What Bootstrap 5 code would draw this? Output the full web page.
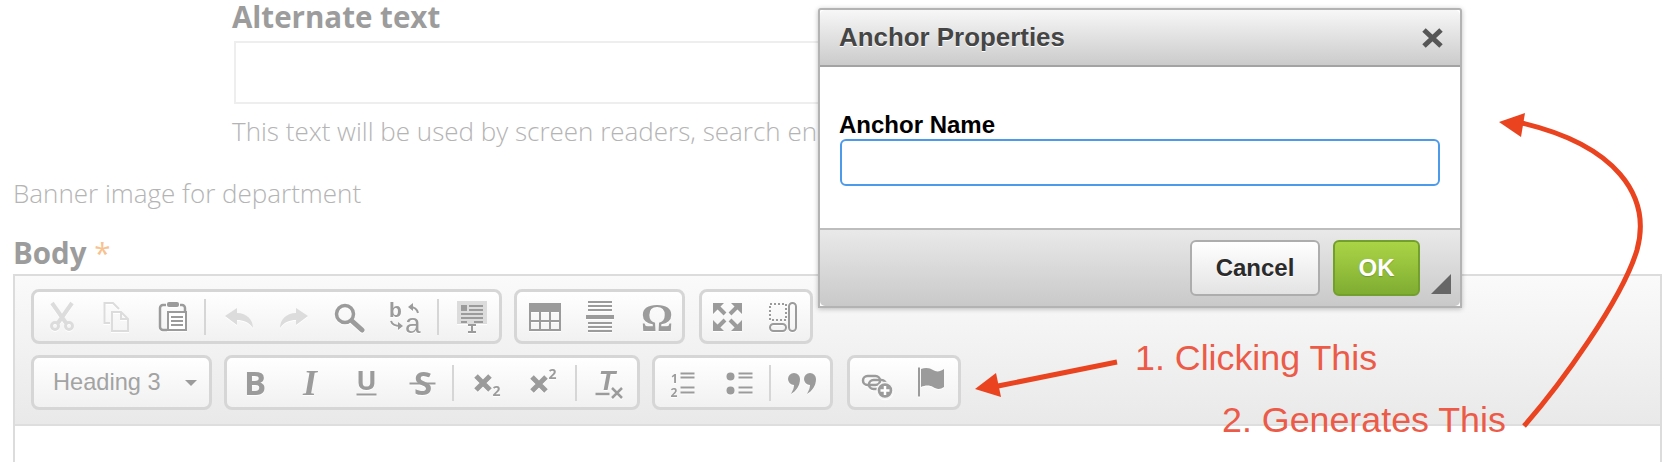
<!DOCTYPE html>
<html lang="en">
<head>
  <meta charset="UTF-8" />
  <meta name="viewport" content="width=device-width, initial-scale=1.0"/>
  <title>Anchor Properties</title>
  <link href="https://cdn.jsdelivr.net/npm/bootstrap@5.3.0/dist/css/bootstrap.min.css" rel="stylesheet">
  <style>
    html, body { height: 462px; overflow: hidden; }
    body { background: #fff; font-family: "Open Sans", sans-serif; position: relative; }

    .page-wrap { padding-left: 13px; padding-right: 18px; height: 462px; overflow: hidden; }
    .field-title { font-size: 29.5px; line-height: 34px; font-weight: 700; color: #9c9c9c; margin: 0; }
    .req-star { color: #f8c18e; font-weight: 400; }
    .alt-block { margin-left: 219px; }
    .alt-input { margin: 7px 0 0 2px; width: 1000px; height: 63px; border: 2px solid #eee; border-radius: 0; }
    .help-line { font-size: 26px; line-height: 36px; font-weight: 300; color: #b4b4b4; margin: 0; white-space: nowrap; }
    .help-alt { margin-top: 9px; }
    .help-banner { margin-top: 26px; }
    .title-body { margin-top: 25px; }

    /* editor */
    .editor-box { margin-top: 4px; height: 220px; border: 2px solid #dcdcdc; border-bottom: 0; background: #fff; }
    .editor-bar { height: 150px; padding: 13px 16px 0; background: linear-gradient(#fafafa, #e9e9e9); border-bottom: 2px solid #dedede; }
    .bar-row { height: 55px; gap: 12px; }
    .bar-row + .bar-row { margin-top: 11px; }
    .tool-group { height: 100%; border: 3px solid #d6d6d6; border-radius: 8px; background: linear-gradient(#fff, #f1f1f1); }
    .tool-group-far { margin-left: 2px; }
    .tool-btn { width: 55px; color: #9b9b9b; }
    .tool-btn-tight { width: 54px; }
    .tool-btn svg { width: 32px; height: 32px; overflow: visible; filter: drop-shadow(0 1px 0 rgba(255,255,255,.9)); }
    .tool-btn.is-off { color: #dcdcdc; }
    .tool-sep { width: 12.5px; }
    .tool-sep-slim { width: 10px; }
    .tool-sep::after, .tool-sep-slim::after { content: ""; display: block; width: 2px; height: 36px; margin: 0 auto; background: #d6d6d6; }
    .format-combo { width: 181px; padding: 0 12px 0 19px; font-family: "Liberation Sans", sans-serif; font-size: 23.6px; color: #a3a3a3; }
    .combo-caret { width: 0; height: 0; border: 6px solid transparent; border-top: 6px solid #9b9b9b; border-bottom: 0; }
    .ico-txt { font-family: "Open Sans", sans-serif; font-weight: 700; fill: currentColor; }
    .ico-serif { font-family: "Liberation Serif", serif; font-weight: 700; fill: currentColor; }
    .ico-sans { font-family: "Liberation Sans", sans-serif; fill: currentColor; }

    /* dialog */
    .anchor-dialog { position: absolute; left: 818px; top: 8px; width: 644px; height: 300px; border: 2px solid #b3b3b3; border-radius: 3px 3px 0 0; box-shadow: 0 1px 5px rgba(0,0,0,.25); font-family: "Liberation Sans", sans-serif; }
    .dlg-head { height: 57px; padding: 0 17px 0 19px; border-bottom: 2px solid #a3a3a3; border-radius: 0; background: linear-gradient(#f7f7f7, #cbcbcb); }
    .dlg-title { font-size: 25.9px; font-weight: 700; color: #454545; text-shadow: 0 1px 0 #fff; }
    .dlg-body { padding: 0 19px; flex: 1; background: #fff; }
    .dlg-label { display: block; margin: 44px 0 1px; font-size: 24px; line-height: 27px; font-weight: 700; color: #000; }
    .dlg-input { margin: 0 0 0 1px; width: 600px; height: 47px; border: 2px solid #4c9aea; border-radius: 6px; }
    .dlg-foot { position: relative; height: 78px; padding: 10px 40px 0 0; border-top: 2px solid #bdbdbd; border-radius: 0; background: linear-gradient(#e9e9e9, #c9c9c9); gap: 13px; }
    .dlg-btn { height: 56px; font-size: 24px; line-height: 1; font-weight: 700; border-radius: 6px; padding: 0; }
    .btn-cancel { width: 130px; color: #2b2b2b; border: 2px solid #adadad; background: linear-gradient(#fff, #e3e3e3); text-shadow: 0 1px 0 #fff; }
    .btn-ok { width: 87px; color: #fff; border: 2px solid #739f2d; background: linear-gradient(#aad446, #7fad32); text-shadow: 0 1px 1px rgba(0,0,0,.2); }
    .resize-grip { position: absolute; right: 9px; bottom: 12px; width: 20px; height: 20px; background: #666; clip-path: polygon(100% 0, 100% 100%, 0 100%); }

    /* annotations over the shot */
    .note-arrows { position: absolute; left: 0; top: 0; width: 1680px; height: 462px; pointer-events: none; }
    .note-text { position: absolute; font-family: "Liberation Sans", sans-serif; font-size: 35.8px; line-height: 40px; color: #ec5b48; white-space: nowrap; }
    .note-one { left: 1135px; top: 338px; }
    .note-two { left: 1222px; top: 400px; }
  </style>
</head>
<body>

<div class="page-wrap">
  <div class="alt-block">
    <h4 class="field-title">Alternate text</h4>
    <input type="text" class="form-control alt-input" aria-label="Alternate text">
    <p class="help-line help-alt">This text will be used by screen readers, search en</p>
  </div>
  <p class="help-line help-banner">Banner image for department</p>
  <h4 class="field-title title-body">Body <span class="req-star">*</span></h4>

  <div class="editor-box">
    <div class="editor-bar">
      <div class="d-flex bar-row">
        <div class="tool-group d-flex">
          <!-- cut -->
          <div class="tool-btn is-off d-flex align-items-center justify-content-center">
            <svg viewBox="0 0 32 32" fill="none" stroke="currentColor"><circle cx="9" cy="25" r="3.5" stroke-width="3"/><circle cx="23" cy="25" r="3.5" stroke-width="3"/><path d="M6 2L20 22M26 2L12 22" stroke-width="4"/></svg>
          </div>
          <!-- copy -->
          <div class="tool-btn is-off d-flex align-items-center justify-content-center">
            <svg viewBox="0 0 32 32" fill="none" stroke="currentColor" stroke-width="2"><path d="M9 22H3.5V2H12l6 6"/><path d="M11 11h9l7 7v12H11zM20 11v7h7"/></svg>
          </div>
          <!-- paste -->
          <div class="tool-btn d-flex align-items-center justify-content-center">
            <svg viewBox="0 0 32 32" fill="none" stroke="currentColor"><path d="M10 4H7a3 3 0 0 0-3 3v19a3 3 0 0 0 3 3h4M24 4h2a3 3 0 0 1 3 3v3" stroke-width="2.5"/><rect x="11" y="1" width="12" height="5" rx="2" fill="currentColor" stroke="none"/><rect x="12" y="11" width="18" height="18" fill="#fff" stroke-width="2"/><path d="M15 16h12M15 20h12M15 24h12" stroke-width="2"/></svg>
          </div>
          <div class="tool-sep d-flex align-items-center"></div>
          <!-- undo -->
          <div class="tool-btn is-off d-flex align-items-center justify-content-center">
            <svg viewBox="0 0 32 32" fill="currentColor"><path d="M2 15L14 7v5c10 0 16 7 16 15-4-6-10-8-16-8v5z"/></svg>
          </div>
          <!-- redo -->
          <div class="tool-btn is-off d-flex align-items-center justify-content-center">
            <svg viewBox="0 0 32 32" fill="currentColor"><path transform="matrix(-1 0 0 1 32 0)" d="M2 15L14 7v5c10 0 16 7 16 15-4-6-10-8-16-8v5z"/></svg>
          </div>
          <!-- find -->
          <div class="tool-btn d-flex align-items-center justify-content-center">
            <svg viewBox="0 0 32 32" fill="none" stroke="currentColor"><circle cx="12" cy="13" r="8.5" stroke-width="3.5"/><path d="M19 20l10 9" stroke-width="5" stroke-linecap="round"/></svg>
          </div>
          <!-- replace -->
          <div class="tool-btn d-flex align-items-center justify-content-center">
            <svg viewBox="0 0 32 32" fill="none" stroke="currentColor"><text x="1" y="16" font-size="21" stroke="none" class="ico-sans" font-weight="700">b</text><text x="17" y="32" font-size="28" stroke="none" class="ico-sans">a</text><path d="M30 12c-1-4-4-6-8-6M3 20c1 3 4 5 9 5" stroke-width="2"/><path d="M25 2l-5 4 5 4zM10 21l5 4-5 4z" fill="currentColor" stroke="none"/></svg>
          </div>
          <div class="tool-sep d-flex align-items-center"></div>
          <!-- templates -->
          <div class="tool-btn d-flex align-items-center justify-content-center">
            <svg viewBox="0 0 32 32" stroke="currentColor" fill="none"><rect x="1" y="0" width="30" height="23" fill="#dcdcdc" stroke="none"/><rect x="5" y="4" width="6" height="6" fill="currentColor" stroke="none"/><path d="M13 5h14M13 9h14M5 13h22M5 17h22M5 21h6M18 21h9" stroke-width="2"/><path d="M12 24h8M12 31h8M16 24v7" stroke-width="2"/></svg>
          </div>
        </div>

        <div class="tool-group d-flex">
          <!-- table -->
          <div class="tool-btn d-flex align-items-center justify-content-center">
            <svg viewBox="0 0 32 32" fill="none" stroke="currentColor" stroke-width="2"><path d="M0 2h32v9H0z" fill="currentColor" stroke="none"/><path d="M1 3h30v26H1zM11 11v18M21 11v18M1 20h30"/></svg>
          </div>
          <!-- horizontal rule -->
          <div class="tool-btn d-flex align-items-center justify-content-center">
            <svg viewBox="0 0 32 32" fill="none" stroke="currentColor" stroke-width="2"><path d="M4 1h24M4 5h24M4 9h24M4 22h24M4 26h24M4 30h24"/><path d="M2 16h28" stroke-width="4"/></svg>
          </div>
          <!-- special char -->
          <div class="tool-btn d-flex align-items-center justify-content-center">
            <svg viewBox="0 0 32 32"><text x="18" y="30" font-size="40" text-anchor="middle" class="ico-serif">Ω</text></svg>
          </div>
        </div>

        <div class="tool-group tool-group-far d-flex">
          <!-- maximize -->
          <div class="tool-btn tool-btn-tight d-flex align-items-center justify-content-center">
            <svg viewBox="0 0 32 32" fill="currentColor" stroke="none"><path d="M0 2h11L0 13zM29 2H18l11 11zM0 30h11L0 19zM29 30H18l11-11z"/><path d="M4 5l8 8M25 5l-8 8M4 27l8-8M25 27l-8-8" fill="none" stroke="currentColor" stroke-width="4"/></svg>
          </div>
          <!-- show blocks -->
          <div class="tool-btn tool-btn-tight d-flex align-items-center justify-content-center">
            <svg viewBox="0 0 32 32" fill="none" stroke="currentColor" stroke-width="2"><rect x="3" y="3" width="16" height="16" stroke-dasharray="2 2"/><rect x="22" y="2" width="7" height="28" rx="3.5"/><rect x="3" y="23" width="16" height="7" rx="3.5"/></svg>
          </div>
        </div>
      </div>

      <div class="d-flex bar-row">
        <div class="tool-group format-combo d-flex align-items-center justify-content-between">
          <span>Heading 3</span>
          <span class="combo-caret"></span>
        </div>

        <div class="tool-group d-flex">
          <div class="tool-btn d-flex align-items-center justify-content-center">
            <svg viewBox="0 0 32 32"><text x="16" y="27.5" font-size="33" text-anchor="middle" class="ico-txt">B</text></svg>
          </div>
          <div class="tool-btn d-flex align-items-center justify-content-center">
            <svg viewBox="0 0 32 32"><text x="16" y="27.5" font-size="36" text-anchor="middle" font-style="italic" class="ico-serif">I</text></svg>
          </div>
          <div class="tool-btn d-flex align-items-center justify-content-center">
            <svg viewBox="0 0 32 32"><text x="17.5" y="22.5" font-size="27" text-anchor="middle" class="ico-txt">U</text><rect x="7.5" y="26.5" width="20" height="2" fill="currentColor"/></svg>
          </div>
          <div class="tool-btn d-flex align-items-center justify-content-center">
            <svg viewBox="0 0 32 32"><text x="19" y="27.5" font-size="33" text-anchor="middle" class="ico-txt">S</text><rect x="5.5" y="15.5" width="26" height="2" fill="currentColor"/></svg>
          </div>
          <div class="tool-sep d-flex align-items-center"></div>
          <div class="tool-btn d-flex align-items-center justify-content-center">
            <svg viewBox="0 0 32 32"><path d="M5 9l14 14M19 9L5 23" fill="none" stroke="currentColor" stroke-width="5"/><text x="21.5" y="29" font-size="14" class="ico-txt">2</text></svg>
          </div>
          <div class="tool-btn d-flex align-items-center justify-content-center">
            <svg viewBox="0 0 32 32"><path d="M6 10l14 14M20 10L6 24" fill="none" stroke="currentColor" stroke-width="5"/><text x="22.5" y="12" font-size="14" class="ico-txt">2</text></svg>
          </div>
          <div class="tool-sep d-flex align-items-center"></div>
          <div class="tool-btn d-flex align-items-center justify-content-center">
            <svg viewBox="0 0 32 32"><text x="13" y="22.5" font-size="27" text-anchor="middle" font-style="italic" font-weight="700" class="ico-sans">T</text><path d="M1.5 27h14M18 21l10 10M28 21L18 31" fill="none" stroke="currentColor" stroke-width="2.5"/></svg>
          </div>
        </div>

        <div class="tool-group d-flex">
          <!-- numbered list -->
          <div class="tool-btn d-flex align-items-center justify-content-center">
            <svg viewBox="0 0 32 32"><text x="4" y="15.5" font-size="12" class="ico-txt">1</text><text x="3.5" y="29.5" font-size="12" class="ico-txt">2</text><path d="M13.5 6.5h14M13.5 10.5h14M13.5 20.5h14M13.5 25.5h14" stroke="currentColor" stroke-width="2"/></svg>
          </div>
          <!-- bulleted list -->
          <div class="tool-btn d-flex align-items-center justify-content-center">
            <svg viewBox="0 0 32 32"><circle cx="8.5" cy="9.5" r="4" fill="currentColor"/><circle cx="8.5" cy="23.5" r="4" fill="currentColor"/><path d="M16.5 6.5h14M16.5 10.5h14M16.5 20.5h14M16.5 25.5h14" stroke="currentColor" stroke-width="2"/></svg>
          </div>
          <div class="tool-sep-slim d-flex align-items-center"></div>
          <!-- blockquote -->
          <div class="tool-btn d-flex align-items-center justify-content-center">
            <svg viewBox="0 0 32 32" fill="currentColor"><path d="M1 12a6 6 0 1 1 12 0c0 7-4 12-9 15 2-4 3-6 3-9a6 6 0 0 1-6-6z"/><path d="M17 12a6 6 0 1 1 12 0c0 7-4 12-9 15 2-4 3-6 3-9a6 6 0 0 1-6-6z"/></svg>
          </div>
        </div>

        <div class="tool-group tool-group-far d-flex">
          <!-- link -->
          <div class="tool-btn tool-btn-tight d-flex align-items-center justify-content-center">
            <svg viewBox="0 0 32 32" fill="none" stroke="currentColor" stroke-width="2.5"><rect x="2" y="9" width="17" height="9" rx="4.5"/><rect x="8" y="13" width="17" height="9" rx="4.5"/><circle cx="24" cy="23.5" r="8" fill="currentColor" stroke="#f6f6f6" stroke-width="1.5"/><path d="M24 19v9M19.5 23.5h9" stroke="#fff"/></svg>
          </div>
          <!-- anchor flag -->
          <div class="tool-btn tool-btn-tight d-flex align-items-center justify-content-center">
            <svg viewBox="0 0 32 32" fill="currentColor"><rect x="3" y="0.5" width="2" height="29"/><path d="M6 2c5-2 9-1 12 1s7 2 11-1v18c-4 3-8 2-11 0s-8-2-12 0z"/></svg>
          </div>
        </div>
      </div>
    </div>
  </div>
</div>

<!-- dialog on top of the form -->
<div class="card anchor-dialog">
  <div class="card-header dlg-head d-flex align-items-center justify-content-between">
    <span class="dlg-title">Anchor Properties</span>
    <svg width="21" height="20" viewBox="0 0 21 20" fill="none" stroke="#565656" stroke-width="5"><path d="M2 2l17 16M19 2L2 18"/></svg>
  </div>
  <div class="card-body dlg-body">
    <label class="form-label dlg-label" for="anchorName">Anchor Name</label>
    <input type="text" id="anchorName" class="form-control dlg-input">
  </div>
  <div class="card-footer dlg-foot d-flex justify-content-end align-items-start">
    <button type="button" class="btn dlg-btn btn-cancel">Cancel</button>
    <button type="button" class="btn dlg-btn btn-ok">OK</button>
    <span class="resize-grip"></span>
  </div>
</div>

<!-- red annotations -->
<svg class="note-arrows" viewBox="0 0 1680 462" fill="none">
  <path d="M1117 362L998 386" stroke="#e9431f" stroke-width="5"/>
  <path d="M975 389L996 373L1001 397Z" fill="#e9431f"/>
  <path d="M1524 426C1560 385 1622 300 1637 250C1652 195 1615 145 1522 123" stroke="#e9431f" stroke-width="5"/>
  <path d="M1499 122L1525 113L1521 137Z" fill="#e9431f"/>
</svg>
<div class="note-text note-one">1. Clicking This</div>
<div class="note-text note-two">2. Generates This</div>

<script src="https://cdn.jsdelivr.net/npm/bootstrap@5.3.0/dist/js/bootstrap.bundle.min.js"></script>
</body>
</html>
